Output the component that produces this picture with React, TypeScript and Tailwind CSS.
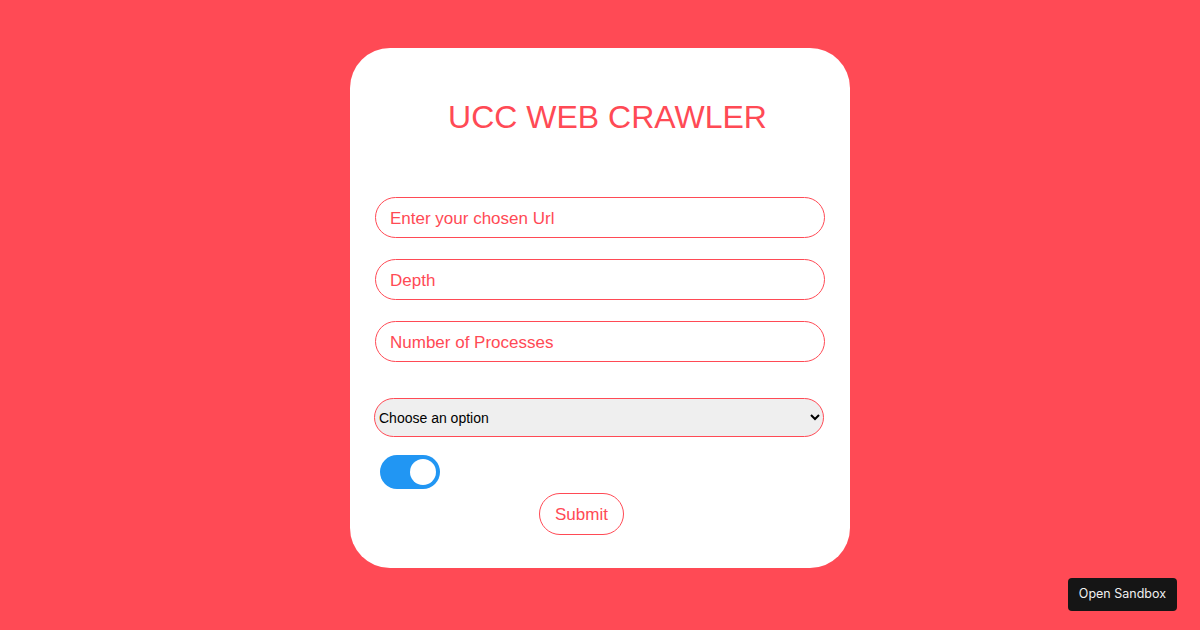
import React from "react";

export default function App() {
  return (
    <div className="relative w-full h-[630px] bg-[#ff4a55] overflow-hidden font-['Liberation_Sans',Arial,sans-serif]">
      <div className="flex justify-center pt-[48px]">
        <div className="w-[500px] h-[520px] bg-white rounded-[40px] flex flex-col px-[25px] pt-[49px]">
          <h1 className="text-[32px] leading-[40px] text-[#ff4a55] text-center pl-[15px]">
            UCC WEB CRAWLER
          </h1>

          <div className="flex flex-col gap-[21px] mt-[60px]">
            <input
              type="text"
              placeholder="Enter your chosen Url"
              className="h-[41px] w-[450px] rounded-full border border-[#ff4a55] px-[14px] pt-[3px] text-[17px] text-[#ff4a55] placeholder:text-[#ff4a55] outline-none"
            />
            <input
              type="text"
              placeholder="Depth"
              className="h-[41px] w-[450px] rounded-full border border-[#ff4a55] px-[14px] pt-[3px] text-[17px] text-[#ff4a55] placeholder:text-[#ff4a55] outline-none"
            />
            <input
              type="text"
              placeholder="Number of Processes"
              className="h-[41px] w-[450px] rounded-full border border-[#ff4a55] px-[14px] pt-[3px] text-[17px] text-[#ff4a55] placeholder:text-[#ff4a55] outline-none"
            />
          </div>

          <select
            defaultValue=""
            className="mt-[36px] -ml-px h-[39px] w-[450px] rounded-full border border-[#ff4a55] bg-[#efefef] pl-0 pr-[3px] text-[14px] text-black"
          >
            <option value="">Choose an option</option>
            <option value="bfs">Breadth first</option>
            <option value="dfs">Depth first</option>
          </select>

          {/* Toggle */}
          <div className="mt-[18px] ml-[5px] w-[60px] h-[34px] rounded-full bg-[#2196f3] flex items-center justify-end pr-[4px]">
            <div className="w-[26px] h-[26px] rounded-full bg-white" />
          </div>

          <button className="mt-[4px] ml-[164px] self-start h-[42px] w-[85px] rounded-full border border-[#ff4a55] bg-white pt-[2px] text-[17px] text-[#ff4a55]">
            Submit
          </button>
        </div>
      </div>

      <div className="absolute right-[23px] bottom-[19px] h-[33px] px-[11px] flex items-center rounded-[4px] bg-[#151515] text-[12.5px] text-[#f0f0f0] font-['Inter',sans-serif]">
        Open Sandbox
      </div>
    </div>
  );
}
